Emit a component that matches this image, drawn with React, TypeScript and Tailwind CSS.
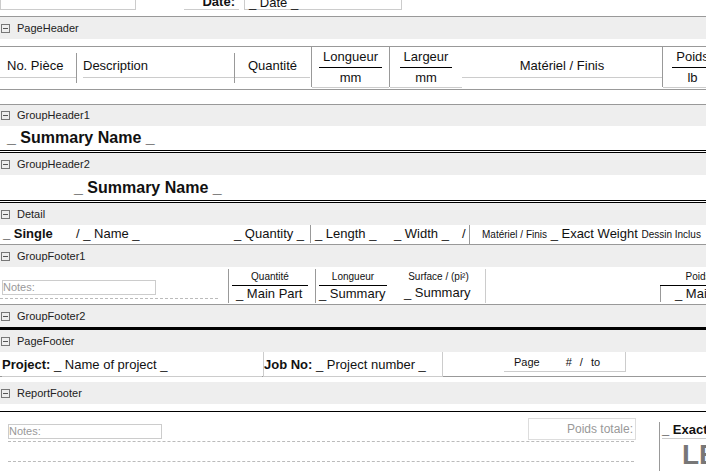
import React from "react";

const Band = ({ label, top }: { label: string; top: string }) => (
  <div className={`flex items-center h-[22px] bg-[#eeeeee] ${top}`}>
    <div className="w-[9px] h-[9px] border border-[#777] ml-[1px] mr-[7px] flex items-center justify-center">
      <div className="w-[5px] h-px bg-[#555]" />
    </div>
    <span className="text-[11px] text-[#222]">{label}</span>
  </div>
);

const A = ({ className, children }: { className: string; children?: React.ReactNode }) => (
  <div className={`absolute whitespace-nowrap ${className}`}>{children}</div>
);

const HeadCell = ({ x, w, top, bottom }: { x: string; w: string; top: string; bottom: string }) => (
  <div className={`absolute top-[8px] h-[40px] ${x} ${w} border-l border-[#999] flex flex-col items-center`}>
    <div className="border-b border-black px-1 text-[13px] leading-[20px]">{top}</div>
    <div className="w-full text-center text-[13px] leading-[19px] border-b border-[#ccc]">{bottom}</div>
  </div>
);

export default function App() {
  return (
    <div className="w-[706px] h-[471px] overflow-hidden bg-white text-[#111]" style={{ fontFamily: "'Liberation Sans', Arial, sans-serif" }}>
      {/* report header tail */}
      <div className="relative h-[17px] border-b border-[#999]">
        <A className="left-0 top-[-2px] w-[136px] h-[12px] border border-[#ccc]" />
        <A className="left-[184px] top-[-8px] w-[55px] h-[18px] border-b border-[#ccc] text-[13px] font-bold text-right pr-1">Date:</A>
        <A className="left-[244px] top-[-8px] w-[158px] h-[18px] border border-[#ccc] text-[13px] pl-1">_ Date _</A>
      </div>
      <Band label="PageHeader" top="" />
      <div className="relative h-[61px]">
        <div className="absolute left-0 right-0 top-[7px] border-t border-[#999]" />
        <div className="absolute left-0 right-0 top-[50px] border-t border-[#999]" />
        <A className="left-0 top-[14px] w-[76px] h-[25px] border-b border-[#ccc] text-[13px] leading-[25px] pl-[7px]">No. Pièce</A>
        <A className="left-[76px] top-[14px] w-[158px] h-[30px] border-l border-[#999] text-[13px] leading-[25px] pl-[6px]"><div className="border-b border-[#ccc] h-[25px]">Description</div></A>
        <A className="left-[234px] top-[14px] w-[76px] h-[30px] border-l border-[#999] text-[13px] leading-[25px] text-center"><div className="border-b border-[#ccc] h-[25px]">Quantité</div></A>
        <HeadCell x="left-[311px]" w="w-[78px]" top="Longueur" bottom="mm" />
        <HeadCell x="left-[389px]" w="w-[73px]" top="Largeur" bottom="mm" />
        <A className="left-[462px] top-[14px] w-[200px] h-[25px] border-b border-[#ccc] text-[13px] leading-[25px] text-center">Matériel / Finis</A>
        <HeadCell x="left-[662px]" w="w-[60px]" top="Poids" bottom="lb" />
      </div>
      <Band label="GroupHeader1" top="mt-[4px] border-t border-[#999]" />
      <div className="flex items-center h-[27px] border-b-[3px] border-double border-black pl-[7px] text-[16px] font-bold">
        _ Summary Name _
      </div>
      <Band label="GroupHeader2" top="" />
      <div className="flex items-center h-[28px] border-b-[3px] border-double border-black pl-[74px] text-[16px] font-bold">
        _ Summary Name _
      </div>
      <Band label="Detail" top="" />
      <div className="relative h-[20px] border-b border-[#999] text-[13px] leading-[18px]">
        <A className="left-[3px] top-0 font-bold">_ Single</A>
        <A className="left-[76px] top-0">/ _ Name _</A>
        <A className="left-[234px] top-0">_ Quantity _</A>
        <A className="left-[310px] top-0 border-l border-[#999] pl-[4px]">_ Length _</A>
        <A className="left-[394px] top-0">_ Width _</A>
        <A className="left-[462px] top-0">/</A>
        <A className="left-[469px] top-0 border-l border-[#999] pl-[12px]"><span className="text-[10px]">Matériel / Finis</span> _ Exact Weight <span className="text-[10px]">Dessin Inclus</span></A>
      </div>
      <Band label="GroupFooter1" top="" />
      <div className="relative h-[38px] border-b border-[#999]">
        <A className="left-[2px] top-[13px] w-[154px] h-[15px] border border-[#ccc] text-[11px] leading-[13px] text-[#999]">Notes:</A>
        <A className="left-0 top-[31px] w-[218px] border-t border-dashed border-[#bbb]" />
        <A className="left-[228px] top-[2px] h-[34px] border-l border-[#999] pl-[3px]">
          <div className="w-[76px] text-center text-[10px] leading-[16px] border-b border-black">Quantité</div>
          <div className="text-[13px] leading-[16px] pl-[4px]">_ Main Part</div>
        </A>
        <A className="left-[315px] top-[2px] h-[34px] border-l border-[#999] pl-[3px]">
          <div className="w-[68px] text-center text-[10px] leading-[16px] border-b border-black">Longueur</div>
          <div className="text-[13px] leading-[16px]">_ Summary</div>
        </A>
        <A className="left-[392px] top-[2px] w-[94px] h-[34px] border-r border-[#ccc]">
          <div className="text-center text-[10px] leading-[16px]">Surface / (pi²)</div>
          <div className="text-[13px] leading-[16px] pl-[12px]">_ Summary</div>
        </A>
        <A className="left-[660px] top-[2px] h-[34px]">
          <div className="w-[60px] text-center text-[10px] leading-[16px] border-b border-black pl-4">Poids</div>
          <div className="text-[13px] leading-[16px] border-l border-[#999] pl-[14px]">_ Main</div>
        </A>
      </div>
      <Band label="GroupFooter2" top="" />
      <div className="h-[3px] bg-black" />
      <Band label="PageFooter" top="" />
      <div className="relative h-[25px] border-b border-[#999] text-[13px] leading-[25px]">
        <A className="left-[2px] top-0 w-[260px] border-b border-[#ccc] h-[25px]"><b>Project:</b> _ Name of project _</A>
        <A className="left-[263px] top-0 w-[180px] border-l border-b border-r border-[#ccc] h-[25px]"><b>Job No:</b> _ Project number _</A>
        <A className="left-[504px] top-0 w-[122px] h-[20px] border-b border-r border-[#ccc] text-[11px] leading-[20px] pl-[10px]">Page<span className="ml-[26px]">#</span><span className="ml-[8px]">/</span><span className="ml-[8px]">to</span></A>
      </div>
      <Band label="ReportFooter" top="mt-[5px]" />
      <div className="relative h-[60px] border-t border-black mt-[7px]">
        <A className="left-[8px] top-[12px] w-[154px] h-[15px] border border-[#ccc] text-[11px] leading-[13px] text-[#999]">Notes:</A>
        <A className="left-[8px] top-[29px] w-[626px] border-t border-dashed border-[#bbb]" />
        <A className="left-[8px] top-[49px] w-[626px] border-t border-dashed border-[#bbb]" />
        <A className="left-[528px] top-[6px] w-[108px] h-[22px] border border-[#ddd] text-[12px] leading-[20px] text-[#999] text-right pr-[2px]">Poids totale:</A>
        <A className="left-[659px] top-[10px] h-[60px] border-l border-[#999] pl-[2px]">
          <div className="text-[13px] font-bold leading-[16px] border-b border-[#ccc]">_ Exact Weight</div>
          <div className="text-[28px] font-bold text-[#777] pl-[20px] leading-[32px]">LBS</div>
        </A>
      </div>
    </div>
  );
}
